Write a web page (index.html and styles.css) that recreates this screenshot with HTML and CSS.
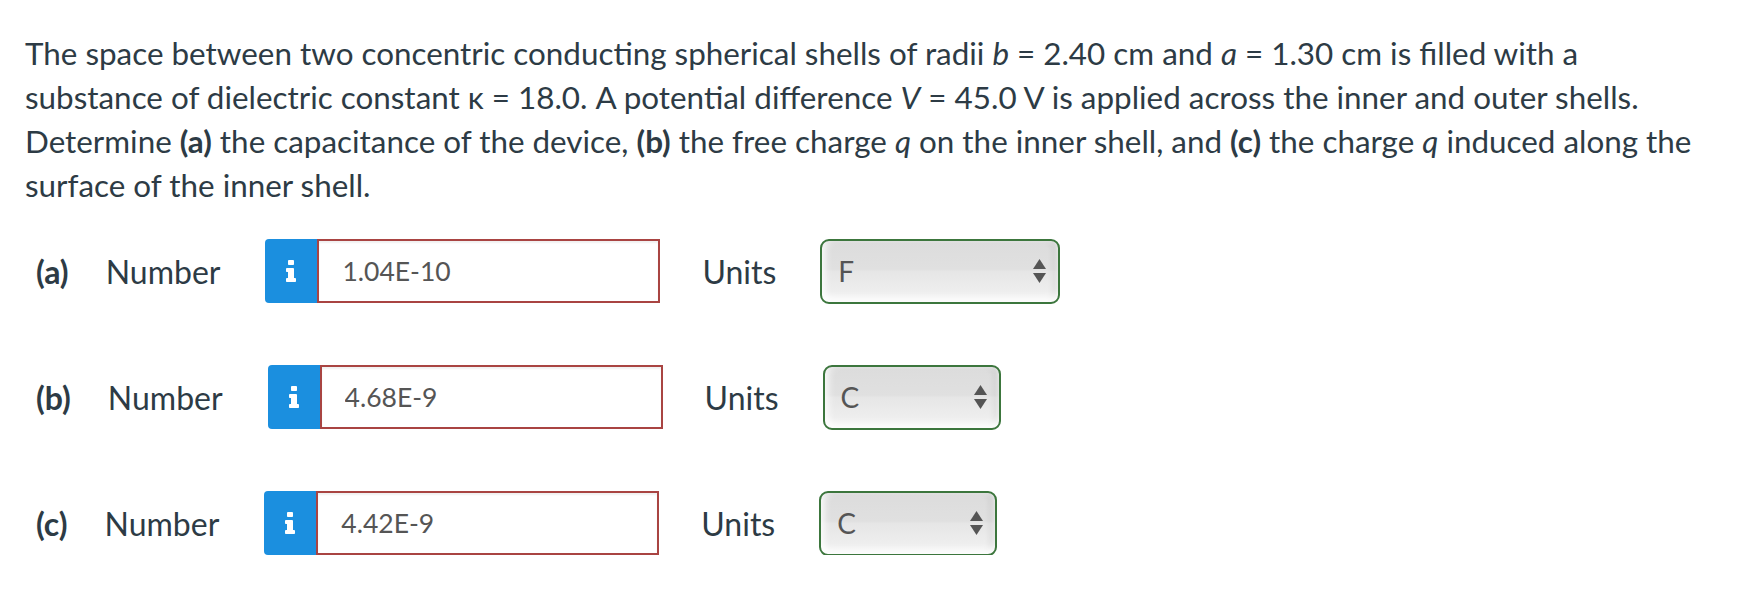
FILE: index.html
```html
<!DOCTYPE html>
<html lang="en">
<head>
<meta charset="utf-8">
<title>Spherical capacitor question</title>
<link rel="stylesheet" href="styles.css">
</head>
<body>
<main class="page">
  <p class="question">The space between two concentric conducting spherical shells of radii <i>b</i> = 2.40 cm and <i>a</i> = 1.30 cm is filled with a substance of dielectric constant κ = 18.0. A potential difference <i>V</i> = 45.0 V is applied across the inner and outer shells. Determine <b>(a)</b> the capacitance of the device, <b>(b)</b> the free charge <i>q</i> on the inner shell, and <b>(c)</b> the charge <i>q</i> induced along the surface of the inner shell.</p>

  <div class="answers">
    <div class="row">
      <span class="part">(a)</span>
      <span class="label">Number</span>
      <div class="field">
        <span class="info"><svg class="info-icon" viewBox="0 128 640 1408" aria-hidden="true"><path d="M640 1344v128q0 26-19 45t-45 19h-512q-26 0-45-19t-19-45v-128q0-26 19-45t45-19h64v-384h-64q-26 0-45-19t-19-45v-128q0-26 19-45t45-19h384q26 0 45 19t19 45v576h64q26 0 45 19t19 45zm-128-1152v192q0 26-19 45t-45 19h-256q-26 0-45-19t-19-45v-192q0-26 19-45t45-19h256q26 0 45 19t19 45z"/></svg></span>
        <input class="value" type="text" value="1.04E-10" readonly>
      </div>
      <span class="units">Units</span>
      <div class="select select-wide"><span class="select-text">F</span><svg class="arrows" viewBox="0 0 13 24" aria-hidden="true"><path d="M6.5 0L13 10H0z"/><path d="M0 14H13L6.5 24z"/></svg></div>
    </div>

    <div class="row">
      <span class="part">(b)</span>
      <span class="label">Number</span>
      <div class="field">
        <span class="info"><svg class="info-icon" viewBox="0 128 640 1408" aria-hidden="true"><path d="M640 1344v128q0 26-19 45t-45 19h-512q-26 0-45-19t-19-45v-128q0-26 19-45t45-19h64v-384h-64q-26 0-45-19t-19-45v-128q0-26 19-45t45-19h384q26 0 45 19t19 45v576h64q26 0 45 19t19 45zm-128-1152v192q0 26-19 45t-45 19h-256q-26 0-45-19t-19-45v-192q0-26 19-45t45-19h256q26 0 45 19t19 45z"/></svg></span>
        <input class="value" type="text" value="4.68E-9" readonly>
      </div>
      <span class="units">Units</span>
      <div class="select"><span class="select-text">C</span><svg class="arrows" viewBox="0 0 13 24" aria-hidden="true"><path d="M6.5 0L13 10H0z"/><path d="M0 14H13L6.5 24z"/></svg></div>
    </div>

    <div class="row">
      <span class="part">(c)</span>
      <span class="label">Number</span>
      <div class="field">
        <span class="info"><svg class="info-icon" viewBox="0 128 640 1408" aria-hidden="true"><path d="M640 1344v128q0 26-19 45t-45 19h-512q-26 0-45-19t-19-45v-128q0-26 19-45t45-19h64v-384h-64q-26 0-45-19t-19-45v-128q0-26 19-45t45-19h384q26 0 45 19t19 45v576h64q26 0 45 19t19 45zm-128-1152v192q0 26-19 45t-45 19h-256q-26 0-45-19t-19-45v-192q0-26 19-45t45-19h256q26 0 45 19t19 45z"/></svg></span>
        <input class="value" type="text" value="4.42E-9" readonly>
      </div>
      <span class="units">Units</span>
      <div class="select"><span class="select-text">C</span><svg class="arrows" viewBox="0 0 13 24" aria-hidden="true"><path d="M6.5 0L13 10H0z"/><path d="M0 14H13L6.5 24z"/></svg></div>
    </div>
  </div>
</main>
</body>
</html>
```

FILE: styles.css
```css
html, body {
  margin: 0;
  padding: 0;
  background: #ffffff;
}

body {
  font-family: Lato, "Noto Sans", "DejaVu Sans", sans-serif;
  color: #2d3b45;
}

.page {
  padding: 31px 0 0 25px;
}

.question {
  margin: 0;
  width: 1690px;
  font-size: 31.4px;
  line-height: 44px;
}

.question b {
  font-weight: 700;
}

.answers {
  display: flex;
  flex-direction: column;
  gap: 62px;
  margin-top: 32px;
  padding-left: 11px;
}

.row {
  display: flex;
  align-items: center;
  height: 64px;
}

.part {
  font-size: 32px;
  font-weight: 700;
}

.label {
  margin-left: 37px;
  font-size: 32px;
}

.field {
  display: flex;
  margin-left: 45px;
  height: 64px;
}

.info {
  display: flex;
  align-items: center;
  justify-content: center;
  width: 52px;
  height: 64px;
  background: #1b8fdf;
  border-radius: 4px 0 0 4px;
}

.info-icon {
  width: 10px;
  height: 22px;
  fill: #ffffff;
}

.value {
  box-sizing: border-box;
  width: 343px;
  height: 64px;
  margin: 0;
  padding: 0 0 0 23px;
  border: 2px solid #a94442;
  border-radius: 0;
  outline: none;
  background: #ffffff;
  box-shadow: inset 0 2px 2px rgba(0, 0, 0, 0.06);
  font-family: Lato, "Noto Sans", sans-serif;
  font-size: 26.5px;
  color: #555555;
}

.units {
  margin-left: 42px;
  font-size: 32px;
}

.select {
  box-sizing: border-box;
  display: flex;
  align-items: center;
  justify-content: space-between;
  width: 178px;
  height: 65px;
  margin-left: 44px;
  padding: 0 12px 0 16px;
  border: 2px solid #3c763d;
  border-radius: 9px;
  background: linear-gradient(to bottom, #dcdcdc 0%, #e0e0e0 46%, #e6e6e6 50%, #ececec 75%, #f3f3f3 100%);
  box-shadow: inset 0 -5px 6px rgba(255, 255, 255, 0.85), inset 5px 0 6px rgba(255, 255, 255, 0.55), inset -5px 0 6px rgba(0, 0, 0, 0.07);
}

.select-wide {
  width: 240px;
}

.select-text {
  font-size: 28px;
  color: #555555;
}

.arrows {
  width: 13px;
  height: 24px;
  fill: #555555;
}
```
